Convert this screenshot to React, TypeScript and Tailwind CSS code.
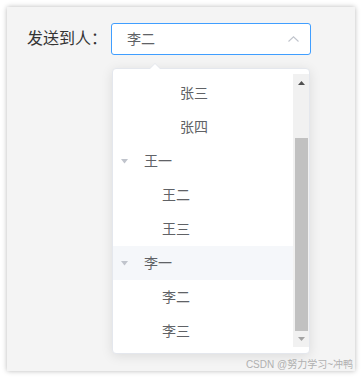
const rows = [
  { label: "张三", level: 3, expanded: false, active: false },
  { label: "张四", level: 3, expanded: false, active: false },
  { label: "王一", level: 1, expanded: true, active: false },
  { label: "王二", level: 2, expanded: false, active: false },
  { label: "王三", level: 2, expanded: false, active: false },
  { label: "李一", level: 1, expanded: true, active: true },
  { label: "李二", level: 2, expanded: false, active: false },
  { label: "李三", level: 2, expanded: false, active: false },
];

const indentClass: Record<number, string> = {
  1: "pl-[5px]",
  2: "pl-[23px]",
  3: "pl-[41px]",
};

const TreeRow = ({ label, level, expanded, active }: (typeof rows)[number]) => (
  <div
    className={`flex h-[34px] shrink-0 items-center ${indentClass[level]} ${
      active ? "bg-[#f5f7fa]" : ""
    }`}
  >
    <span className="flex w-[12px] justify-center">
      {expanded && (
        <svg width="7" height="5" viewBox="0 0 7 5">
          <polygon points="0,0 7,0 3.5,4.5" fill="#c0c4cc" />
        </svg>
      )}
    </span>
    <span className="ml-[14px] text-[14px] leading-[20px] text-[#606266]">{label}</span>
  </div>
);

export default function App() {
  return (
    <div className="h-[379px] w-[363px] bg-white pl-[7px] pt-[7px] font-['Liberation_Sans','Noto_Sans_CJK_SC',sans-serif]">
      <div className="relative h-[364px] w-[348px] bg-[#f4f4f4] shadow-[0_0_5px_rgba(0,0,0,0.28)]">
        <div className="flex items-center pl-[20px] pt-[16px]">
          <label className="w-[84px] text-[16px] leading-[22px] text-[#333333]">发送到人：</label>

          <div className="relative w-[200px]">
            <div className="flex h-[32px] items-center justify-between rounded-[3px] border border-[#409eff] bg-white pl-[15px] pr-[11px]">
              <span className="text-[14px] text-[#606266]">李二</span>
              <svg width="11" height="6" viewBox="0 0 11 6">
                <polyline points="0.5,5.5 5.5,0.8 10.5,5.5" fill="none" stroke="#c0c4cc" strokeWidth="1.1" />
              </svg>
            </div>

            {/* dropdown */}
            <div className="absolute left-[1px] top-[45px] h-[286px] w-[198px] rounded-[4px] border border-[#e4e7ed] bg-white pb-[6px] pt-[5px] shadow-[0_2px_12px_rgba(0,0,0,0.1)]">
              <div className="absolute -top-[6px] left-[36px] h-0 w-0 border-x-[6px] border-b-[6px] border-x-transparent border-b-[#e4e7ed]" />
              <div className="absolute -top-[5px] left-[37px] h-0 w-0 border-x-[5px] border-b-[5px] border-x-transparent border-b-white" />

              <div className="flex h-[273px]">
                <div className="flex flex-1 flex-col overflow-hidden pt-[2px]">
                  {rows.map((r) => (
                    <TreeRow key={r.label} {...r} />
                  ))}
                </div>

                {/* scrollbar */}
                <div className="flex w-[16px] flex-col bg-[#f1f1f1]">
                  <div className="flex h-[17px] items-center justify-center">
                    <svg width="7" height="4" viewBox="0 0 7 4">
                      <polygon points="0,4 7,4 3.5,0" fill="#505050" />
                    </svg>
                  </div>
                  <div className="h-[47px]" />
                  <div className="ml-[2px] h-[193px] w-[13px] bg-[#c1c1c1]" />
                  <div className="flex flex-1 items-center justify-center">
                    <svg width="7" height="4" viewBox="0 0 7 4">
                      <polygon points="0,0 7,0 3.5,4" fill="#a3a3a3" />
                    </svg>
                  </div>
                </div>
              </div>
            </div>
          </div>
        </div>

        <span className="absolute bottom-[0px] right-[2px] text-[10px] leading-[12px] text-[#b0b0b0]">
          CSDN @努力学习~冲鸭
        </span>
      </div>
    </div>
  );
}
